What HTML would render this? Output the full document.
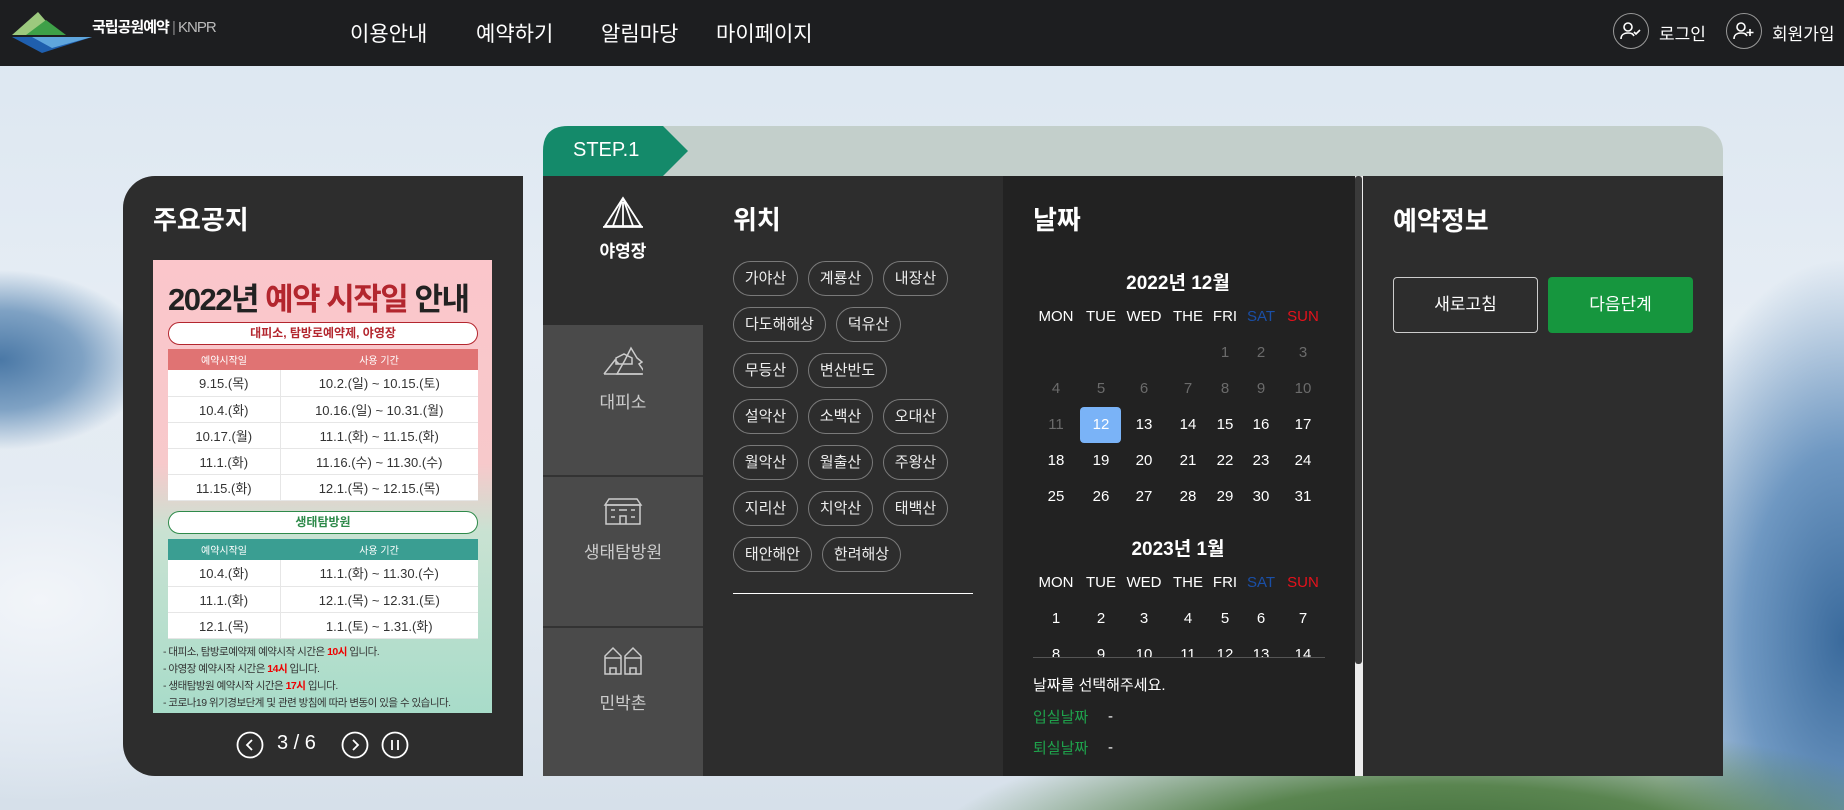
<!DOCTYPE html>
<html><head><meta charset="utf-8">
<style>
*{margin:0;padding:0;box-sizing:border-box}
body{width:1844px;height:810px;overflow:hidden;position:relative;font-family:"Liberation Sans","Noto Sans CJK KR",sans-serif;color:#fff;
background:
 radial-gradient(ellipse 520px 130px at 1450px 850px,#3d6a38 0%,#5a8550 50%,rgba(110,145,110,0) 100%),
 radial-gradient(ellipse 200px 380px at 1844px 640px,#3a6a9c 0%,#6f98c2 50%,rgba(150,180,210,0) 100%),
 radial-gradient(ellipse 150px 90px at 0px 360px,#4a78a6 0%,#7fa2c4 55%,rgba(170,195,220,0) 100%),
 radial-gradient(ellipse 300px 200px at 40px 600px,#f2f5f9 0%,#e4ebf3 60%,rgba(225,233,242,0) 100%),
 linear-gradient(#dbe6f1 0%,#e6edf4 40%,#e3eaf1 70%,#d6e0ea 100%);}
.abs{position:absolute}
.hdr{left:0;top:0;width:1844px;height:66px;background:#1d1e20}
.nav{top:18px;font-size:21px;color:#fff}
.ci{border:1px solid #999;border-radius:50%;width:36px;height:36px}
.panelL{left:123px;top:176px;width:400px;height:600px;background:#2d2d2d;border-radius:32px 0 0 32px}
.h2{font-size:26px;font-weight:bold}
.chip{position:absolute;height:35px;border:1px solid #7a7a7a;border-radius:18px;font-size:15px;line-height:33px;text-align:center;color:#eee}
.side{position:absolute;left:543px;width:160px;text-align:center;font-size:17px}
.cal{position:absolute;font-size:15px;text-align:center;width:40px;margin-left:-20px}
table{border-collapse:collapse;position:absolute;left:15px;width:310px;font-size:13px;color:#333}
td{height:26px;text-align:center;background:#fff;border-bottom:1px solid #e6e6e6}
td+td{border-left:1px solid #e6e6e6}
th{height:21px;font-size:10px;font-weight:normal;color:#fff}
.pill{position:absolute;left:15px;width:310px;height:23px;border-radius:12px;background:#fff;font-size:12px;font-weight:bold;text-align:center;line-height:21px}
.note{position:absolute;left:10px;font-size:10.5px;color:#333;white-space:nowrap;letter-spacing:-0.5px}
.note b{color:#e00}
</style></head><body>

<div class="abs hdr"></div>
<svg class="abs" style="left:12px;top:10px" width="80" height="44" viewBox="0 0 80 44">
<polygon points="0,25 26,2 46,25" fill="#9cc97e"/><polygon points="14,25 34,10 54,25" fill="#3ea048"/>
<polygon points="0,27 80,27 30,43" fill="#1f5fae"/><polygon points="20,27 80,27 40,38" fill="#5fa6dd"/></svg>
<div class="abs" style="left:92px;top:16px;font-size:15px;font-weight:bold;letter-spacing:-1px">국립공원예약 <span style="color:#888;font-weight:normal">|</span> <span style="color:#bbb;font-weight:normal">KNPR</span></div>
<div class="abs nav" style="left:350px">이용안내</div>
<div class="abs nav" style="left:476px">예약하기</div>
<div class="abs nav" style="left:601px">알림마당</div>
<div class="abs nav" style="left:716px">마이페이지</div>
<div class="abs ci" style="left:1613px;top:13px"></div>
<svg class="abs" style="left:1620px;top:20px" width="22" height="22" viewBox="0 0 22 22" fill="none" stroke="#fff" stroke-width="1.6"><circle cx="8" cy="7" r="4"/><path d="M1 19c0-4 3-6 7-6s5 1 6 3"/><path d="M14 12l2 2 4-4"/></svg>
<div class="abs" style="left:1659px;top:20px;font-size:17px">로그인</div>
<div class="abs ci" style="left:1726px;top:13px"></div>
<svg class="abs" style="left:1733px;top:20px" width="22" height="22" viewBox="0 0 22 22" fill="none" stroke="#fff" stroke-width="1.6"><circle cx="8" cy="7" r="4"/><path d="M1 19c0-4 3-6 7-6s5 1 6 3"/><path d="M17 9v7M13.5 12.5h7"/></svg>
<div class="abs" style="left:1772px;top:20px;font-size:17px">회원가입</div>

<!-- left panel -->
<div class="abs panelL"></div>
<div class="abs h2" style="left:153px;top:200px">주요공지</div>
<div class="abs" style="left:153px;top:260px;width:339px;height:453px;background:linear-gradient(#fbc6cb 0%,#f7c9cb 45%,#c9e2d2 60%,#a8dcc9 100%);overflow:hidden">
 <div class="abs" style="left:15px;top:14px;font-size:31px;font-weight:bold;color:#222;letter-spacing:-1.5px;white-space:nowrap">2022년 <span style="color:#b3262e">예약 시작일</span> 안내</div>
 <div class="pill" style="top:62px;border:1.5px solid #b3262e;color:#b3262e">대피소, 탐방로예약제, 야영장</div>
 <table style="top:89px"><tr style="background:#e07373"><th style="width:112px">예약시작일</th><th>사용 기간</th></tr>
 <tr><td>9.15.(목)</td><td>10.2.(일) ~ 10.15.(토)</td></tr>
 <tr><td>10.4.(화)</td><td>10.16.(일) ~ 10.31.(월)</td></tr>
 <tr><td>10.17.(월)</td><td>11.1.(화) ~ 11.15.(화)</td></tr>
 <tr><td>11.1.(화)</td><td>11.16.(수) ~ 11.30.(수)</td></tr>
 <tr><td>11.15.(화)</td><td>12.1.(목) ~ 12.15.(목)</td></tr></table>
 <div class="pill" style="top:251px;border:1.5px solid #2e8a4a;color:#2e8a4a">생태탐방원</div>
 <table style="top:279px"><tr style="background:#3a9e92"><th style="width:112px">예약시작일</th><th>사용 기간</th></tr>
 <tr><td>10.4.(화)</td><td>11.1.(화) ~ 11.30.(수)</td></tr>
 <tr><td>11.1.(화)</td><td>12.1.(목) ~ 12.31.(토)</td></tr>
 <tr><td>12.1.(목)</td><td>1.1.(토) ~ 1.31.(화)</td></tr></table>
 <div class="note" style="top:384px">- 대피소, 탐방로예약제 예약시작 시간은 <b>10시</b> 입니다.</div>
 <div class="note" style="top:401px">- 야영장 예약시작 시간은 <b>14시</b> 입니다.</div>
 <div class="note" style="top:418px">- 생태탐방원 예약시작 시간은 <b>17시</b> 입니다.</div>
 <div class="note" style="top:435px">- 코로나19 위기경보단계 및 관련 방침에 따라 변동이 있을 수 있습니다.</div>
</div>
<svg class="abs" style="left:236px;top:731px" width="180" height="28" viewBox="0 0 180 28" fill="none" stroke="#fff" stroke-width="1.8">
<circle cx="14" cy="14" r="12.5"/><path d="M16 9l-5 5 5 5"/>
<circle cx="119" cy="14" r="12.5"/><path d="M117 9l5 5-5 5"/>
<circle cx="159" cy="14" r="12.5"/><path d="M156 9v10M162 9v10"/></svg>
<div class="abs" style="left:277px;top:732px;font-size:20px">3 / 6</div>

<!-- step panel -->
<div class="abs" style="left:543px;top:126px;width:1180px;height:50px;background:#c3cfcb;border-radius:25px 25px 0 0"></div>
<svg class="abs" style="left:543px;top:126px" width="146" height="50"><path d="M25 0H120L145 25L120 50H0V25Q0 0 25 0Z" fill="#148a6a"/></svg>
<div class="abs" style="left:573px;top:139px;font-size:20px">STEP.1</div>
<div class="abs" style="left:543px;top:176px;width:1180px;height:600px;background:#2d2d2d"></div>
<div class="abs" style="left:543px;top:325px;width:160px;height:451px;background:#4a4a4a"></div>
<div class="abs" style="left:543px;top:475px;width:160px;height:2px;background:#333"></div>
<div class="abs" style="left:543px;top:626px;width:160px;height:2px;background:#333"></div>
<svg class="abs" style="left:603px;top:196px" width="40" height="33" viewBox="0 0 40 33" fill="none" stroke="#fff" stroke-width="1.8"><path d="M20 2L2 30h36Z"/><path d="M20 2L10 30M20 2L30 30M20 6v24"/><path d="M0 31h40"/></svg>
<div class="side" style="top:237px;font-weight:bold">야영장</div>
<svg class="abs" style="left:603px;top:346px" width="40" height="30" viewBox="0 0 40 30" fill="none" stroke="#ccc" stroke-width="1.5"><path d="M1 28L12 14l4 4M14 28l8-14 6-12 6 10 5 4-3 2 7 10Z"/><path d="M1 28h38"/><path d="M13 12l8-4 8 4v6H13Z"/></svg>
<div class="side" style="top:388px;color:#ccc">대피소</div>
<svg class="abs" style="left:603px;top:497px" width="40" height="28" viewBox="0 0 40 28" fill="none" stroke="#ccc" stroke-width="1.5"><path d="M2 8L6 2h28l4 6H2Z"/><rect x="3" y="8" width="34" height="19"/><path d="M8 13h4M8 20h4M28 13h4M28 20h4M16 13h8M17 27v-8h6v8"/></svg>
<div class="side" style="top:538px;color:#ccc">생태탐방원</div>
<svg class="abs" style="left:603px;top:646px" width="40" height="30" viewBox="0 0 40 30" fill="none" stroke="#ccc" stroke-width="1.5"><path d="M2 28V10l8-8 8 8v18ZM22 28V10l8-8 8 8v18Z"/><path d="M2 12h16M22 12h16M7 28v-6h6v6M27 28v-6h6v6"/></svg>
<div class="side" style="top:689px;color:#ccc">민박촌</div>

<div class="abs h2" style="left:733px;top:200px">위치</div>
<div class="chip" style="left:733px;top:261px;width:65px">가야산</div>
<div class="chip" style="left:808px;top:261px;width:65px">계룡산</div>
<div class="chip" style="left:883px;top:261px;width:65px">내장산</div>
<div class="chip" style="left:733px;top:307px;width:93px">다도해해상</div>
<div class="chip" style="left:836px;top:307px;width:65px">덕유산</div>
<div class="chip" style="left:733px;top:353px;width:65px">무등산</div>
<div class="chip" style="left:808px;top:353px;width:79px">변산반도</div>
<div class="chip" style="left:733px;top:399px;width:65px">설악산</div>
<div class="chip" style="left:808px;top:399px;width:65px">소백산</div>
<div class="chip" style="left:883px;top:399px;width:65px">오대산</div>
<div class="chip" style="left:733px;top:445px;width:65px">월악산</div>
<div class="chip" style="left:808px;top:445px;width:65px">월출산</div>
<div class="chip" style="left:883px;top:445px;width:65px">주왕산</div>
<div class="chip" style="left:733px;top:491px;width:65px">지리산</div>
<div class="chip" style="left:808px;top:491px;width:65px">치악산</div>
<div class="chip" style="left:883px;top:491px;width:65px">태백산</div>
<div class="chip" style="left:733px;top:537px;width:79px">태안해안</div>
<div class="chip" style="left:822px;top:537px;width:79px">한려해상</div>
<div class="abs" style="left:733px;top:593px;width:240px;height:1px;background:#fff"></div>

<!-- calendar -->
<div class="abs" style="left:1003px;top:176px;width:352px;height:600px;background:#222"></div>
<div class="abs" style="left:1355px;top:176px;width:8px;height:600px;background:#ececec"></div>
<div class="abs" style="left:1355px;top:176px;width:7px;height:488px;background:#3a3a3a;border-radius:3px"></div>
<div class="abs h2" style="left:1033px;top:200px">날짜</div>
<div class="abs" style="left:1033px;top:176px;width:295px;height:481px;overflow:hidden">
<div id="c" style="position:relative;left:-1033px;top:-176px;width:1400px;height:800px"></div>
</div>
<div class="abs" style="left:1033px;top:657px;width:292px;height:1px;background:#555"></div>
<div class="abs" style="left:1033px;top:674px;font-size:15px">날짜를 선택해주세요.</div>
<div class="abs" style="left:1033px;top:706px;font-size:15px;color:#1fa24c">입실날짜</div>
<div class="abs" style="left:1108px;top:708px;font-size:15px">-</div>
<div class="abs" style="left:1033px;top:737px;font-size:15px;color:#1fa24c">퇴실날짜</div>
<div class="abs" style="left:1108px;top:739px;font-size:15px">-</div>

<!-- right -->
<div class="abs h2" style="left:1393px;top:201px">예약정보</div>
<div class="abs" style="left:1393px;top:277px;width:145px;height:56px;border:1px solid #ccc;border-radius:4px;text-align:center;line-height:54px;font-size:17px">새로고침</div>
<div class="abs" style="left:1548px;top:277px;width:145px;height:56px;background:#16963e;border-radius:4px;text-align:center;line-height:56px;font-size:17px">다음단계</div>

<script>
var xs=[1056,1101,1144,1188,1225,1261,1303],h='';
function t(x,y,s,st){h+='<div class="cal" style="left:'+x+'px;top:'+(y-9)+'px;'+(st||'')+'">'+s+'</div>';}
function month(y,title,start,days,grey){
 h+='<div class="abs" style="left:1078px;width:200px;text-align:center;top:'+(y-12)+'px;font-size:19px;font-weight:bold">'+title+'</div>';
 var wd=['MON','TUE','WED','THE','FRI','SAT','SUN'];
 for(var i=0;i<7;i++)t(xs[i],y+37,wd[i],i==5?'color:#1a4fa6':i==6?'color:#e5121c':'');
 var r=0,c=start;
 for(var d=1;d<=days;d++){
  var yy=y+73+r*36,st=d<=grey?'color:#6b6b6b':'';
  if(title=='2022년 12월'&&d==12)h+='<div class="abs" style="left:1080px;top:'+(yy-18)+'px;width:41px;height:36px;background:#7ab3f7;border-radius:4px"></div>';
  t(xs[c],yy,d,st);c++;if(c>6){c=0;r++;}
 }
}
month(280,'2022년 12월',4,31,11);
month(546,'2023년 1월',0,31,0);
document.getElementById('c').innerHTML=h;
</script>
</body></html>
